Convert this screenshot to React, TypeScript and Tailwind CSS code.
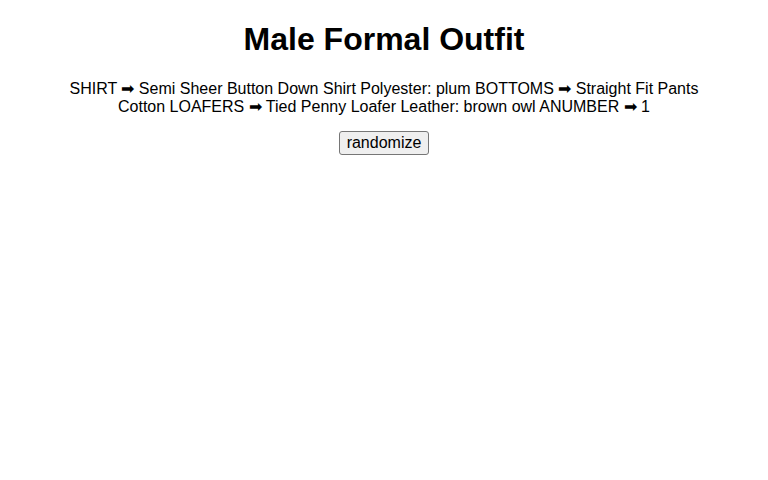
import { useState } from "react";

const outfit = [
  { label: "SHIRT", value: "Semi Sheer Button Down Shirt Polyester: plum" },
  { label: "BOTTOMS", value: "Straight Fit Pants Cotton" },
  { label: "LOAFERS", value: "Tied Penny Loafer Leather: brown owl" },
  { label: "ANUMBER", value: "1" },
];

export default function App() {
  const [items] = useState(outfit);

  return (
    <div className="min-h-[480px] bg-white text-black text-center font-['Liberation_Sans',Arial,sans-serif]">
      <h1 className="pt-[21px] text-[32px] font-bold leading-[37px]">Male Formal Outfit</h1>
      <p className="mx-auto mt-[22px] max-w-[640px] text-[16px] leading-[18px]">
        {items.map((item) => `${item.label} ➡ ${item.value}`).join(" ")}
      </p>
      <div className="mt-[15px]">
        <button className="rounded-[3px] border border-[#767676] bg-[#efefef] px-[7px] py-[2px] text-[16px] leading-[18px]">
          randomize
        </button>
      </div>
    </div>
  );
}
